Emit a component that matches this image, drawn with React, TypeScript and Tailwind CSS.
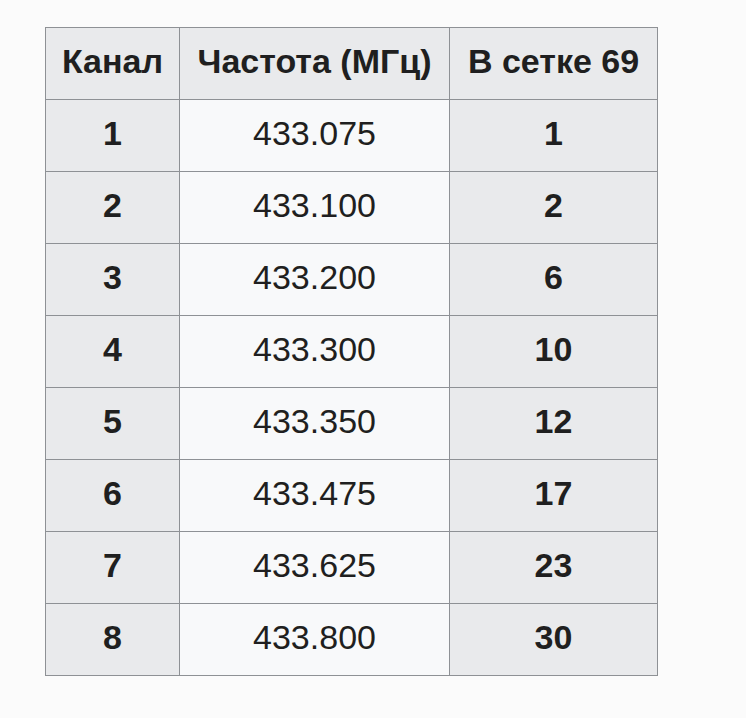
import React from "react";

const rows: [string, string, string][] = [
  ["1", "433.075", "1"],
  ["2", "433.100", "2"],
  ["3", "433.200", "6"],
  ["4", "433.300", "10"],
  ["5", "433.350", "12"],
  ["6", "433.475", "17"],
  ["7", "433.625", "23"],
  ["8", "433.800", "30"],
];

export default function App() {
  return (
    <div
      className="w-[746px] h-[718px] bg-[#fbfbfb] pl-[45px] pt-[27px] text-[#1f1f20]"
      style={{ fontFamily: '"Liberation Sans", Arial, sans-serif' }}
    >
      <table className="border-collapse border border-[#8e9195] text-[34px] leading-none">
        <thead>
          <tr className="h-[72px]">
            <th className="w-[134px] border border-[#8e9195] bg-[#e9eaec] font-bold text-center pb-[6px]">Канал</th>
            <th className="w-[270px] border border-[#8e9195] bg-[#e9eaec] font-bold text-center pb-[6px]">Частота (МГц)</th>
            <th className="w-[208px] border border-[#8e9195] bg-[#e9eaec] font-bold text-center pb-[6px]">В сетке 69</th>
          </tr>
        </thead>
        <tbody>
          {rows.map(([a, b, c]) => (
            <tr key={a} className="h-[72px]">
              <th className="border border-[#8e9195] bg-[#e9eaec] font-bold text-center pb-[6px]">{a}</th>
              <td className="border border-[#8e9195] bg-[#f8f9fa] font-normal text-center pb-[6px]">{b}</td>
              <th className="border border-[#8e9195] bg-[#e9eaec] font-bold text-center pb-[6px]">{c}</th>
            </tr>
          ))}
        </tbody>
      </table>
    </div>
  );
}
